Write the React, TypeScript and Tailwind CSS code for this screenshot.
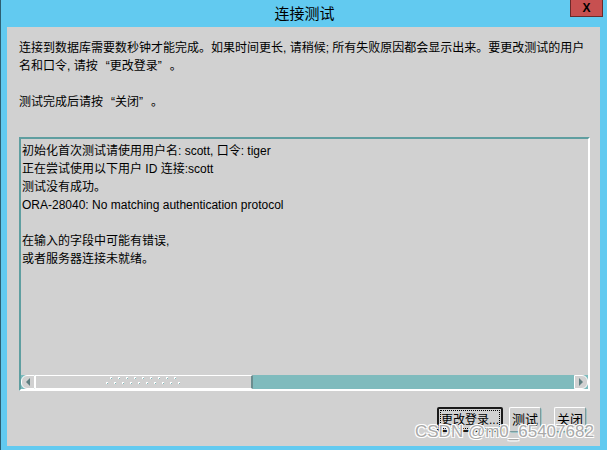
import React from 'react';

const sans = "font-['SimSun','Liberation_Sans','Noto_Sans_CJK_SC',sans-serif]";

// 全角引号：占一个汉字宽，左引号靠右、右引号靠左
function OpenQ() {
  return <span className="inline-block w-[12px] text-right">“</span>;
}
function CloseQ() {
  return <span className="inline-block w-[12px] text-left">”</span>;
}

function ScrollGrip() {
  // 两排错开的小点，滚动条滑块中间的抓手纹理
  const top = Array.from({ length: 9 }, (_, i) => 4 + i * 8);
  const bottom = Array.from({ length: 10 }, (_, i) => i * 8);
  return (
    <svg width="76" height="10" viewBox="0 0 76 10">
      {top.map((x) => (
        <g key={'t' + x}>
          <rect x={x} y={0} width={2} height={2} fill="#ffffff" />
          <rect x={x + 1} y={1} width={1} height={1} fill="#7fbbbd" />
        </g>
      ))}
      {bottom.map((x) => (
        <g key={'b' + x}>
          <rect x={x} y={5} width={2} height={2} fill="#ffffff" />
          <rect x={x + 1} y={6} width={1} height={1} fill="#7fbbbd" />
        </g>
      ))}
    </svg>
  );
}

function HScrollBar() {
  return (
    <div className="flex h-[14px] w-full bg-[#7fbbbd]">
      <div className="flex h-full w-[14px] items-center justify-center rounded-l-[6px] border border-white bg-[#d1d1d1]">
        <svg width="6" height="8" viewBox="0 0 6 8">
          <path d="M5 0 L1 4 L5 8 Z" fill="#5e7e80" />
        </svg>
      </div>
      <div className="flex h-full w-[218px] items-center justify-center border-y border-l border-white border-r-2 border-r-[#6b8d8f] bg-[#d1d1d1]">
        <ScrollGrip />
      </div>
      <div className="flex-1" />
      <div className="flex h-full w-[14px] items-center justify-center rounded-r-[6px] border border-white bg-[#d1d1d1]">
        <svg width="6" height="8" viewBox="0 0 6 8">
          <path d="M1 0 L5 4 L1 8 Z" fill="#5e7e80" />
        </svg>
      </div>
    </div>
  );
}

function DialogButton({ label, isDefault, width }: { label: string; isDefault?: boolean; width: string }) {
  if (isDefault) {
    return (
      <button className={`h-[25px] ${width} rounded-[2px] border-2 border-[#1a1a1a] bg-[#d1d1d1] p-px`}>
        <div className="flex h-full w-full items-center justify-center whitespace-nowrap border border-dotted border-black text-[12px] leading-none text-black">
          {label}
        </div>
      </button>
    );
  }
  return (
    <button
      className={`flex h-[25px] ${width} items-center justify-center whitespace-nowrap rounded-[2px] border border-t-white border-l-white border-r-[#7a9a9c] border-b-[#7a9a9c] bg-[#d1d1d1] text-[13px] leading-none text-black shadow-[1px_1px_0_#9fc4c6]`}
    >
      {label}
    </button>
  );
}

export default function App() {
  const output = [
    '初始化首次测试请使用用户名: scott, 口令: tiger',
    '正在尝试使用以下用户 ID 连接:scott',
    '测试没有成功。',
    'ORA-28040: No matching authentication protocol',
    '',
    '在输入的字段中可能有错误,',
    '或者服务器连接未就绪。',
  ];

  return (
    <div className={`relative h-[450px] w-[607px] overflow-hidden bg-[#62caf0] ${sans}`}>
      <div className="absolute left-0 top-0 h-full w-px bg-[#2d5f72]" />

      {/* 标题栏 */}
      <div className="relative flex h-[27px] items-center justify-center">
        <span className="pl-[2px] text-[15px] leading-none text-black">连接测试</span>
        <div className="absolute right-[4px] top-0 flex h-[17px] w-[33px] items-center justify-center border border-t-0 border-[#6b2a2a] bg-[#c75050]">
          <span className="text-[12px] font-bold leading-none text-black">X</span>
        </div>
      </div>

      {/* 对话框主体 */}
      <div className="mx-[7px] flex h-[419px] flex-col bg-[#d1d1d1] px-[12px] pt-[12px] text-[12px] leading-[18px] text-black">
        <p>
          连接到数据库需要数秒钟才能完成。如果时间更长, 请稍候; 所有失败原因都会显示出来。要更改测试的用户名和口令, 请按
          <OpenQ />
          更改登录
          <CloseQ />。
        </p>
        <p className="mt-[18px]">
          测试完成后请按
          <OpenQ />
          关闭
          <CloseQ />。
        </p>

        <div className="mr-[-2px] mt-[26px] flex h-[254px] flex-col border-2 border-t-[#5f9ea0] border-l-[#5f9ea0] border-r-white border-b-white">
          <div className="flex-1 pl-[1px] pt-[3px]">
            {output.map((line, i) => (
              <div key={i} className="h-[18px] whitespace-pre">
                {line}
              </div>
            ))}
          </div>
          <HScrollBar />
        </div>

        <div className="mt-[16px] flex justify-end gap-[6px] pr-[2px]">
          <DialogButton label="更改登录..." isDefault width="w-[66px]" />
          <DialogButton label="测试" width="w-[32px]" />
          <div className="w-px" />
          <DialogButton label="关闭" width="w-[32px]" />
        </div>
      </div>

      {/* 水印 */}
      <div className="pointer-events-none absolute left-[415px] top-[423px] whitespace-nowrap font-['Liberation_Sans',sans-serif] text-[17px] leading-none text-[#a9a9a9] [text-shadow:1px_1px_0_#fff,-1px_-1px_0_#fff,1px_-1px_0_#fff,-1px_1px_0_#fff]">
        CSDN @m0_65407682
      </div>
    </div>
  );
}
